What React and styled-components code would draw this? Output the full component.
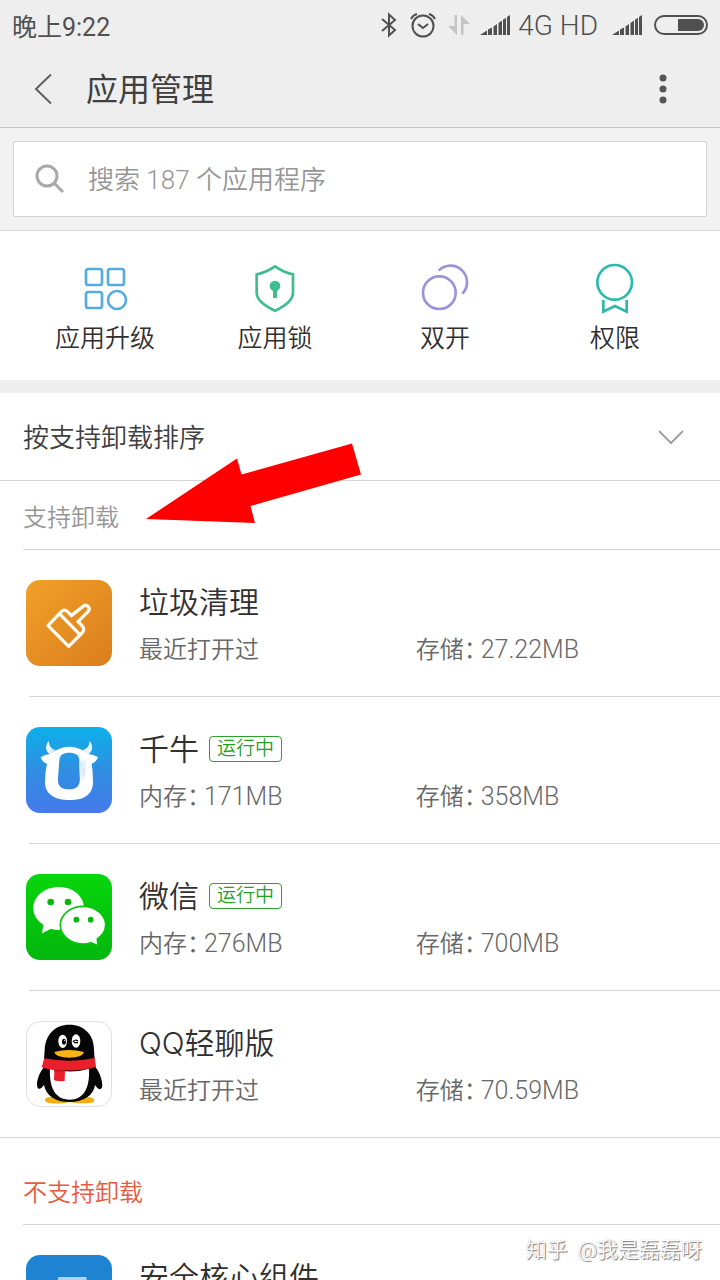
import React from "react";
import styled, { createGlobalStyle } from "styled-components";

const GlobalStyle = createGlobalStyle`
  * { box-sizing: border-box; }
  body {
    margin: 0;
    background: #fff;
    font-family: Roboto, "Noto Sans CJK SC", sans-serif;
    font-weight: 350;
    color: #303030;
  }
  button, input, select { font: inherit; color: inherit; }
`;

const Screen = styled.div`
  position: relative;
  display: flex;
  flex-direction: column;
  height: 100vh;
  overflow: hidden;
  background: #fff;
`;

const Header = styled.header`
  flex: none;
  background: #eeeeef;
  border-bottom: 1px solid #c6c6ca;
`;

const StatusBar = styled.div`
  display: flex;
  align-items: center;
  justify-content: space-between;
  height: 50px;
  padding: 0 12px;
  font-size: 25px;
  font-weight: 400;
  color: #505050;
`;

const StatusIcons = styled.div`
  display: flex;
  align-items: center;
`;

const StatusIcon = styled.svg`
  display: block;
  margin-left: ${(p) => p.$gap}px;
`;

const Network = styled.span`
  margin-left: 8px;
  font-size: 28px;
  font-weight: 350;
`;

const TitleBar = styled.div`
  display: flex;
  align-items: center;
  height: 77px;
  padding: 0 34px 0 20px;
`;

const Title = styled.h1`
  flex: 1;
  margin: 0;
  padding: 2px 0 0 20px;
  font-size: 32px;
  font-weight: 400;
  line-height: 48px;
  color: #404040;
`;

const IconButton = styled.button`
  display: flex;
  align-items: center;
  justify-content: center;
  width: 46px;
  height: 46px;
  padding: 0;
  border: 0;
  background: none;
`;

const Content = styled.main`
  flex: 1;
  min-height: 0;
  overflow-y: auto;
  scrollbar-width: none;
`;

const SearchArea = styled.div`
  padding: 13px;
  background: #f2f2f3;
  border-bottom: 1px solid #dadadc;
`;

const SearchBox = styled.label`
  display: flex;
  align-items: center;
  height: 76px;
  padding: 0 20px;
  background: #fff;
  border: 1px solid #d2d2d4;
  border-radius: 2px;
`;

const SearchInput = styled.input`
  flex: 1;
  min-width: 0;
  height: 48px;
  margin-left: 22px;
  padding: 2px 0 0;
  border: 0;
  outline: 0;
  background: none;
  font-size: 26px;
  &::placeholder { color: #969696; opacity: 1; }
`;

const Actions = styled.nav`
  display: grid;
  grid-template-columns: repeat(4, 1fr);
  padding: 31px 20px 23px;
`;

const ActionButton = styled.button`
  display: flex;
  flex-direction: column;
  align-items: center;
  gap: 7px;
  padding: 0;
  border: 0;
  background: none;
  font-size: 25px;
  line-height: 36px;
`;

const SortRow = styled.div`
  display: grid;
  align-items: center;
  height: 101px;
  border-top: 13px solid #eeeeef;
  border-bottom: 1px solid #d6d6d6;
`;

const SortSelect = styled.select`
  grid-area: 1 / 1;
  width: 100%;
  height: 86px;
  padding: 2px 23px 0;
  border: 0;
  outline: 0;
  appearance: none;
  background: none;
  font-size: 26px;
  color: #404040;
`;

const SortChevron = styled.svg`
  grid-area: 1 / 1;
  justify-self: end;
  margin-right: 35px;
  pointer-events: none;
`;

const SectionTitle = styled.h2`
  margin: 0 0 0 23px;
  padding: ${(p) => (p.$warning ? "37px" : "19px")} 0 13px;
  border-bottom: 1px solid #d6d6d6;
  font-size: 24px;
  font-weight: 350;
  line-height: 36px;
  color: ${(p) => (p.$warning ? "#e8593f" : "#969696")};
`;

const AppList = styled.ul`
  margin: 0;
  padding: 0;
  list-style: none;
`;

const Divider = styled.hr`
  height: 1px;
  margin: 0 0 0 ${(p) => (p.$full ? "0" : "29px")};
  border: 0;
  background: #d6d6d6;
`;

const AppRow = styled.div`
  display: flex;
  gap: 27px;
  padding: 30px 0 30px 26px;
`;

const AppIcon = styled.svg`
  flex: none;
  width: 86px;
  height: 86px;
`;

const AppInfo = styled.div`
  flex: 1;
  display: flex;
  flex-direction: column;
  gap: 10px;
`;

const NameLine = styled.div`
  display: flex;
  align-items: center;
  gap: 10px;
`;

const AppName = styled.h3`
  margin: 0;
  font-family: Inter, "Noto Sans CJK SC", sans-serif;
  font-size: 30px;
  font-weight: 350;
  line-height: 44px;
`;

const Badge = styled.span`
  padding: 0 7px;
  border: 1px solid #2c9f2c;
  border-radius: 4px;
  font-size: 19px;
  line-height: 24px;
  color: #22a022;
`;

const Stats = styled.div`
  display: grid;
  grid-template-columns: 10fr 11fr;
  font-size: 24px;
  line-height: 32px;
  color: #686868;
`;

const StatItem = styled.span`
  display: flex;
  gap: 5px;
`;

const StatLabel = styled.span`
  font-feature-settings: "halt";
`;

const StatValue = styled.span`
  font-size: 25px;
`;

const Pointer = styled.svg`
  position: absolute;
  left: 146px;
  top: 443px;
  pointer-events: none;
`;

const Watermark = styled.div`
  position: absolute;
  right: 18px;
  bottom: 14px;
  display: flex;
  gap: 10px;
  font-size: 21px;
  font-weight: 350;
  line-height: 32px;
  color: #fff;
  text-shadow: 1px 1px 1px #777, 0 0 1px #aaa;
`;

const Signal = ({ gap }) => (
  <StatusIcon $gap={gap} width="30" height="20" viewBox="0 0 30 20" fill="#505050" aria-hidden="true">
    <path d="M0 20 7 15.500V20ZM8 14.500 12 12.500V20H8ZM13.500 11.500 17 9V20H13.500ZM18.500 8 22 5.500V20H18.500ZM23 4.500 26 3V20H23ZM27 2 30 0V20H27Z" />
  </StatusIcon>
);

const BrushIcon = () => (
  <AppIcon viewBox="78 30 258 258" aria-hidden="true">
    <defs>
      <linearGradient id="brush" x1="0" y1="0" x2="1" y2="1">
        <stop offset="0" stopColor="#f0a027" />
        <stop offset="1" stopColor="#db7d1e" />
      </linearGradient>
    </defs>
    <rect x="78" y="30" width="258" height="258" rx="42" fill="url(#brush)" />
    <g fill="none" stroke="#fffaf0" strokeWidth="10" strokeLinejoin="round">
      <path d="M144 167 184 125Q194 115 204 126L214 137 249 109Q257 102 264 109 271 117 264 125L234 155 246 167Q256 178 246 189L206 229Z" />
      <path d="M178 131 239 193" />
    </g>
  </AppIcon>
);

const BullIcon = () => (
  <AppIcon viewBox="78 37 258 258" aria-hidden="true">
    <defs>
      <linearGradient id="bull" x1="0" y1="0" x2="0" y2="1">
        <stop offset="0" stopColor="#0cb0ea" />
        <stop offset="0.5" stopColor="#2f8fe2" />
        <stop offset="1" stopColor="#4679ec" />
      </linearGradient>
      <linearGradient id="horn" x1="0" y1="0" x2="1" y2="0">
        <stop offset="0" stopColor="#fff" />
        <stop offset="1" stopColor="#b5dcf8" />
      </linearGradient>
      <linearGradient id="cheek" x1="1" y1="0" x2="0" y2="1">
        <stop offset="0" stopColor="#fff" />
        <stop offset="0.5" stopColor="#dbe9fb" />
        <stop offset="1" stopColor="#fff" />
      </linearGradient>
    </defs>
    <rect x="78" y="37" width="258" height="258" rx="42" fill="url(#bull)" />
    <path fill="url(#horn)" d="M146 79C148 96 155 104 168 106L154 121C137 112 133 96 146 79Z" />
    <path fill="#e6f4fe" d="M269 79C267 96 260 104 247 106L261 121C278 112 282 96 269 79Z" />
    <path fill="#fff" fillRule="evenodd" d="M122 128C137 116 153 121 166 108Q208 84 250 108C261 121 278 116 294 128C289 141 281 145 275 147Q279 171 279 202C279 240 252 256 209 256S135 240 135 202Q135 171 141 147C132 145 126 139 122 128ZM178 138 174 190C172 214 184 224 207 224S240 214 240 190L238 138C238 120 226 114 208 114S179 120 178 138Z" />
    <path fill="url(#cheek)" d="M238 142 260 130Q264 185 240 205Z" />
  </AppIcon>
);

const ChatIcon = () => (
  <AppIcon viewBox="78 37 258 258" aria-hidden="true">
    <defs>
      <linearGradient id="chat" x1="0" y1="0" x2="0" y2="1">
        <stop offset="0" stopColor="#08d60c" />
        <stop offset="1" stopColor="#02b60d" />
      </linearGradient>
    </defs>
    <rect x="78" y="37" width="258" height="258" rx="42" fill="url(#chat)" />
    <path fill="#fff" d="M177 76C219 76 252 103 252 140S219 205 177 205Q164 205 153 201L126 215 130 190Q100 170 100 140C100 103 134 76 177 76Z" />
    <path fill="#fff" stroke="#05c60c" strokeWidth="5" d="M249 134C287 134 317 159 317 190Q317 214 292 232L294 252 272 243Q262 247 249 247C211 247 181 221 181 190S211 134 249 134Z" />
    <g fill="#05b90c">
      <circle cx="152" cy="121" r="10" />
      <circle cx="204" cy="121" r="10" />
      <circle cx="229" cy="174" r="8.500" />
      <circle cx="272" cy="174" r="8.500" />
    </g>
  </AppIcon>
);

const PenguinIcon = () => (
  <AppIcon viewBox="78 33 258 258" aria-hidden="true">
    <rect x="79.500" y="34.500" width="255" height="255" rx="42" fill="#fff" stroke="#dedede" strokeWidth="3" />
    <path fill="#f6ad12" d="M137 275C130 264 143 260 161 261L208 270 255 261C275 259 287 266 281 276 273 282 222 280 209 276 195 281 147 283 137 275Z" />
    <path fill="#060606" d="M208 44C253 44 282 75 282 118L284 151Q285 164 287 172C299 187 307 211 307 226 306 243 294 240 285 225 281 256 251 276 209 276S137 256 132 224C123 239 112 242 111 224 111 208 119 187 130 174L134 120C136 75 164 44 208 44Z" />
    <path fill="#fff" d="M150 174Q208 194 267 176C270 232 252 269 209 269S147 233 150 174Z" />
    <path fill="#e9202b" d="M133 145Q209 160 284 144L288 171Q248 183 195 181L194 213Q178 215 162 211L163 181Q142 178 125 172Z" />
    <path fill="#a60f18" d="M163 181 195 181 195 184 163 184Z" />
    <path fill="#f8b414" d="M163 126Q207 114 252 126C249 137 232 143 208 143S166 137 163 126Z" />
    <ellipse cx="188" cy="94" rx="13" ry="20" fill="#fff" />
    <ellipse cx="228" cy="93" rx="13" ry="20" fill="#fff" />
    <ellipse cx="192" cy="95" rx="6" ry="9" fill="#060606" />
    <circle cx="194" cy="91" r="2" fill="#fff" />
    <path d="M219 96Q226 86 234 94M222 98H234" fill="none" stroke="#060606" strokeWidth="4" />
  </AppIcon>
);

const CoreIcon = () => (
  <AppIcon viewBox="0 0 258 258" aria-hidden="true">
    <rect width="258" height="258" rx="42" fill="#1d83d2" />
    <rect x="96" y="66" width="86" height="126" rx="4" fill="#a9d5f5" />
  </AppIcon>
);

const actions = [
  {
    label: "应用升级",
    box: "117 36 156 156",
    color: "#55ace0",
    art: (
      <>
        <rect x="138" y="57" width="48" height="48" rx="7" />
        <rect x="204" y="57" width="48" height="48" rx="7" />
        <rect x="138" y="126" width="48" height="48" rx="7" />
        <circle cx="231" cy="150" r="27" />
      </>
    ),
  },
  {
    label: "应用锁",
    box: "627 36 156 156",
    color: "#3fbd8f",
    art: (
      <>
        <path d="M705 49C722 61 740 69 759 73V128C759 153 733 169 705 182 677 169 650 153 650 128V73C670 69 688 61 705 49Z" />
        <circle cx="705" cy="108" r="12" fill="#3fbd8f" />
        <path d="M705 112V144" strokeWidth="12" />
      </>
    ),
  },
  {
    label: "双开",
    box: "57 36 156 156",
    color: "#9c92da",
    art: (
      <>
        <circle cx="118" cy="128" r="49" />
        <path d="M116 62A49 49 0 1 1 187 131" />
      </>
    ),
  },
  {
    label: "权限",
    box: "567 36 156 156",
    color: "#2fb9ac",
    art: (
      <>
        <circle cx="644" cy="97" r="52" />
        <path d="M610 150V185L645 168 680 185V150" />
      </>
    ),
  },
];

const apps = [
  { name: "垃圾清理", icon: <BrushIcon />, storage: "27.22MB" },
  { name: "千牛", icon: <BullIcon />, memory: "171MB", storage: "358MB" },
  { name: "微信", icon: <ChatIcon />, memory: "276MB", storage: "700MB" },
  { name: "QQ轻聊版", icon: <PenguinIcon />, storage: "70.59MB" },
];

const systemApps = [{ name: "安全核心组件", icon: <CoreIcon /> }];

const Stat = ({ label, value }) => (
  <StatItem>
    <StatLabel>{label}：</StatLabel>
    <StatValue>{value}</StatValue>
  </StatItem>
);

const AppItem = ({ app, last }) => (
  <li>
    <AppRow>
      {app.icon}
      <AppInfo>
        <NameLine>
          <AppName>{app.name}</AppName>
          {app.memory && <Badge>运行中</Badge>}
        </NameLine>
        {app.storage && (
          <Stats>
            {app.memory ? <Stat label="内存" value={app.memory} /> : <span>最近打开过</span>}
            <Stat label="存储" value={app.storage} />
          </Stats>
        )}
      </AppInfo>
    </AppRow>
    <Divider $full={last} />
  </li>
);

export default function App() {
  return (
    <Screen lang="zh-CN">
      <GlobalStyle />
      <Header>
        <StatusBar>
          <span>晚上9:22</span>
          <StatusIcons>
            <StatusIcon $gap={0} width="18" height="26" viewBox="0 0 18 26" fill="none" stroke="#505050" strokeWidth="2" aria-hidden="true">
              <path d="M2 7 15 18 9 23.500V2.500L15 8 2 19" />
            </StatusIcon>
            <StatusIcon $gap={12} width="26" height="26" viewBox="0 0 26 26" fill="none" stroke="#505050" strokeWidth="2" aria-hidden="true">
              <circle cx="13" cy="14" r="10.500" />
              <path d="M8 12 13 16 18 12M1 7Q3 3 7 2M25 7Q23 3 19 2" />
            </StatusIcon>
            <StatusIcon $gap={12} width="22" height="22" viewBox="0 0 22 22" fill="#c4c4c5" aria-hidden="true">
              <path d="M6.500 1H9V21L0 12H6.500ZM13 1 22 10H15.500V21H13Z" />
            </StatusIcon>
            <Signal gap={10} />
            <Network>4G HD</Network>
            <Signal gap={14} />
            <StatusIcon $gap={12} width="54" height="20" viewBox="0 0 54 20" aria-hidden="true">
              <rect x="1" y="1" width="52" height="18" rx="9" fill="none" stroke="#505050" strokeWidth="2" />
              <path d="M24 4H44A6 6 0 0 1 44 16H24Z" fill="#505050" />
            </StatusIcon>
          </StatusIcons>
        </StatusBar>
        <TitleBar>
          <IconButton aria-label="返回">
            <svg width="18" height="32" viewBox="0 0 18 32" fill="none" stroke="#606060" strokeWidth="2">
              <path d="M17 1.500 2 16 17 30.500" />
            </svg>
          </IconButton>
          <Title>应用管理</Title>
          <IconButton aria-label="更多">
            <svg width="8" height="30" viewBox="0 0 8 30" fill="#555">
              <circle cx="4" cy="4" r="3.500" />
              <circle cx="4" cy="15" r="3.500" />
              <circle cx="4" cy="26" r="3.500" />
            </svg>
          </IconButton>
        </TitleBar>
      </Header>
      <Content>
        <SearchArea>
          <SearchBox>
            <svg width="32" height="32" viewBox="0 0 32 32" fill="none" stroke="#a8a8a8" strokeWidth="3" aria-hidden="true">
              <circle cx="13" cy="13" r="10" />
              <path d="M20 20 29 29" />
            </svg>
            <SearchInput type="search" aria-label="搜索应用程序" placeholder="搜索 187 个应用程序" />
          </SearchBox>
        </SearchArea>
        <Actions>
          {actions.map((a) => (
            <ActionButton key={a.label}>
              <svg width="52" height="52" viewBox={a.box} fill="none" stroke={a.color} strokeWidth="8" aria-hidden="true">
                {a.art}
              </svg>
              {a.label}
            </ActionButton>
          ))}
        </Actions>
        <SortRow>
          <SortSelect aria-label="排序方式">
            <option>按支持卸载排序</option>
          </SortSelect>
          <SortChevron width="28" height="16" viewBox="0 0 28 16" fill="none" stroke="#a0a0a0" strokeWidth="2" aria-hidden="true">
            <path d="M2 2 14 14 26 2" />
          </SortChevron>
        </SortRow>
        <SectionTitle>支持卸载</SectionTitle>
        <AppList>
          {apps.map((app, i) => (
            <AppItem key={app.name} app={app} last={i === apps.length - 1} />
          ))}
        </AppList>
        <SectionTitle $warning>不支持卸载</SectionTitle>
        <AppList>
          {systemApps.map((app) => (
            <AppItem key={app.name} app={app} last />
          ))}
        </AppList>
      </Content>
      <Pointer width="216" height="82" viewBox="0 0 216 82" fill="#fe0000" aria-hidden="true">
        <path d="M0 76 91 15.500 95.500 31.500 206 .5 215 31.500 104.500 63 109 80Z" />
      </Pointer>
      <Watermark>
        <span>知乎</span>
        <span>@我是磊磊呀</span>
      </Watermark>
    </Screen>
  );
}
